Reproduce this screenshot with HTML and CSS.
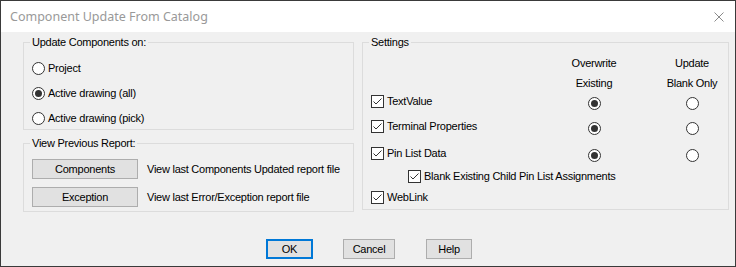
FILE: index.html
```html
<!DOCTYPE html>
<html>
<head>
<meta charset="utf-8">
<title>Component Update From Catalog</title>
<link rel="stylesheet" href="styles.css">
</head>
<body>
<div class="window">
  <div class="titlebar">
    <span class="title">Component Update From Catalog</span>
    <svg class="close" width="10" height="10" viewBox="0 0 10 10"><path d="M0.5 0.5L9.5 9.5M9.5 0.5L0.5 9.5" stroke="#8a8a8a" stroke-width="1" fill="none"/></svg>
  </div>
  <div class="content">
    <div class="columns">
      <div class="left">
        <fieldset class="group g-update">
          <legend>Update Components on:</legend>
          <div class="radio-list">
            <div class="opt"><span class="radio"></span>Project</div>
            <div class="opt"><span class="radio on"></span>Active drawing (all)</div>
            <div class="opt"><span class="radio"></span>Active drawing (pick)</div>
          </div>
        </fieldset>
        <fieldset class="group g-report">
          <legend>View Previous Report:</legend>
          <div class="report-row"><span class="btn btn-wide">Components</span><span>View last Components Updated report file</span></div>
          <div class="report-row"><span class="btn btn-wide">Exception</span><span>View last Error/Exception report file</span></div>
        </fieldset>
      </div>
      <fieldset class="group g-settings">
        <legend>Settings</legend>
        <div class="sgrid">
          <div class="hcell">Overwrite</div>
          <div class="hcell">Update</div>
          <div class="hcell h2">Existing</div>
          <div class="hcell h2">Blank Only</div>

          <div class="chk-cell"><span class="check"><svg width="11" height="11" viewBox="0 0 11 11"><path d="M1.5 5.5L4 8L9.5 2.5" stroke="#333" stroke-width="1" fill="none"/></svg></span>TextValue</div>
          <div class="rcell"><span class="radio on"></span></div>
          <div class="rcell"><span class="radio"></span></div>

          <div class="chk-cell"><span class="check"><svg width="11" height="11" viewBox="0 0 11 11"><path d="M1.5 5.5L4 8L9.5 2.5" stroke="#333" stroke-width="1" fill="none"/></svg></span>Terminal Properties</div>
          <div class="rcell"><span class="radio on"></span></div>
          <div class="rcell"><span class="radio"></span></div>

          <div class="chk-cell"><span class="check"><svg width="11" height="11" viewBox="0 0 11 11"><path d="M1.5 5.5L4 8L9.5 2.5" stroke="#333" stroke-width="1" fill="none"/></svg></span>Pin List Data</div>
          <div class="rcell"><span class="radio on"></span></div>
          <div class="rcell"><span class="radio"></span></div>

          <div class="chk-cell wide indent"><span class="check"><svg width="11" height="11" viewBox="0 0 11 11"><path d="M1.5 5.5L4 8L9.5 2.5" stroke="#333" stroke-width="1" fill="none"/></svg></span>Blank Existing Child Pin List Assignments</div>

          <div class="chk-cell wide"><span class="check"><svg width="11" height="11" viewBox="0 0 11 11"><path d="M1.5 5.5L4 8L9.5 2.5" stroke="#333" stroke-width="1" fill="none"/></svg></span>WebLink</div>
        </div>
      </fieldset>
    </div>
    <div class="actions">
      <span class="btn btn-ok">OK</span>
      <span class="btn btn-cancel">Cancel</span>
      <span class="btn btn-help">Help</span>
    </div>
  </div>
</div>
</body>
</html>
```

FILE: styles.css
```css
html, body {
  margin: 0;
  padding: 0;
  background: #ffffff;
}

.window {
  box-sizing: border-box;
  width: 736px;
  height: 267px;
  border: 1px solid #3a3a3a;
  background: #f0f0f0;
  font-family: "Liberation Sans", Arial, sans-serif;
  font-size: 11px;
  letter-spacing: -0.25px;
  color: #000;
  display: flex;
  flex-direction: column;
}

.titlebar {
  height: 31px;
  flex: none;
  background: #ffffff;
  display: flex;
  align-items: center;
  padding-left: 9px;
}

.title {
  font-family: "Noto Sans", "Open Sans", sans-serif;
  font-size: 12.5px;
  letter-spacing: 0;
  color: #999999;
}

.close {
  margin-left: auto;
  margin-right: 11px;
}

.content {
  flex: 1;
  padding: 3px 6px 0 22px;
}

.columns {
  display: flex;
  gap: 8px;
  align-items: flex-start;
}

.left {
  width: 331px;
  display: flex;
  flex-direction: column;
}

.group {
  box-sizing: border-box;
  margin: 0;
  padding: 0 8px;
  min-width: 0;
  border: 1px solid #dcdcdc;
}

.group legend {
  padding: 0 2px;
  margin-left: -2px;
  height: 15px;
  line-height: 15px;
}

.g-update {
  height: 95px;
  padding-top: 12px;
}

.radio-list {
  display: flex;
  flex-direction: column;
  gap: 12px;
}

.opt {
  display: flex;
  align-items: center;
  height: 13px;
  line-height: 13px;
}

.radio {
  box-sizing: border-box;
  width: 13px;
  height: 13px;
  border: 1px solid #333;
  border-radius: 50%;
  background: #fff;
  display: inline-flex;
  align-items: center;
  justify-content: center;
  flex: none;
}

.opt .radio {
  margin-right: 3px;
}

.radio.on::after {
  content: "";
  width: 7px;
  height: 7px;
  border-radius: 50%;
  background: #333;
}

.g-report {
  margin-top: 6px;
  height: 76px;
  padding-top: 8px;
}

.report-row {
  display: flex;
  align-items: center;
  height: 20px;
}

.report-row + .report-row {
  margin-top: 8px;
}

.btn {
  box-sizing: border-box;
  display: inline-flex;
  align-items: center;
  justify-content: center;
  height: 20px;
  background: #e1e1e1;
  border: 1px solid #adadad;
  letter-spacing: -0.25px;
}

.btn-wide {
  width: 106px;
  margin-right: 9px;
}

.g-settings {
  width: 367px;
  height: 175px;
  padding-top: 3px;
}

.sgrid {
  display: grid;
  grid-template-columns: 165px 80px 80px;
  column-gap: 18px;
  grid-template-rows: 20px 22px 25px 27px 23px 21px 13px;
  align-items: start;
}

.hcell {
  grid-column: auto;
  text-align: center;
  line-height: 20px;
}

.hcell:nth-child(1), .hcell:nth-child(3) {
  grid-column: 2;
}

.hcell:nth-child(2), .hcell:nth-child(4) {
  grid-column: 3;
}

.chk-cell {
  grid-column: 1;
  display: flex;
  align-items: center;
  height: 13px;
  line-height: 13px;
  white-space: nowrap;
}

.chk-cell.wide {
  grid-column: 1 / span 3;
}

.chk-cell.indent {
  padding-left: 37px;
}

.check {
  box-sizing: border-box;
  width: 13px;
  height: 13px;
  border: 1px solid #333;
  background: #fff;
  margin-right: 3px;
  display: inline-block;
  flex: none;
}

.check svg {
  display: block;
}

.rcell {
  justify-self: center;
  margin-top: 2px;
  height: 13px;
}

.actions {
  display: flex;
  margin-top: 27px;
  padding-left: 243px;
}

.btn-ok {
  width: 47px;
  border: 2px solid #0078d7;
}

.btn-cancel {
  width: 52px;
  margin-left: 30px;
}

.btn-help {
  width: 46px;
  margin-left: 31px;
}
```
